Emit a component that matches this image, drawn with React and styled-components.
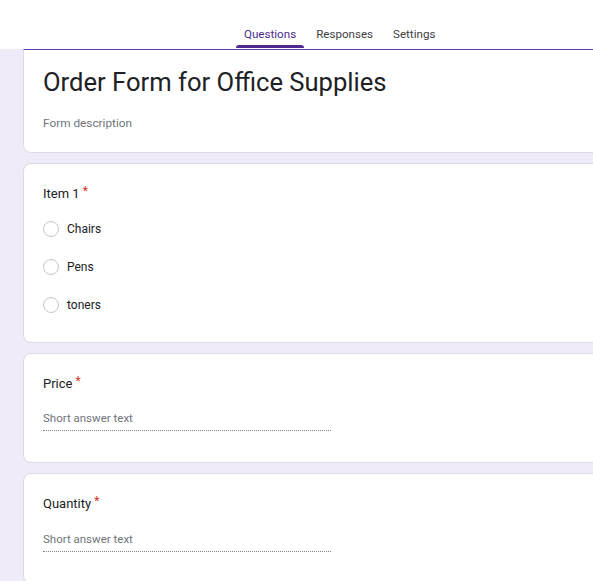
import React from "react";
import styled, { createGlobalStyle } from "styled-components";

const Global = createGlobalStyle`
  html, body { margin: 0; padding: 0; }
  body {
    background: #f0ebf8;
    font-family: Roboto, "Liberation Sans", Arial, sans-serif;
    overflow: hidden;
    color: #202124;
  }
`;

const Page = styled.div`
  width: 593px;
  height: 581px;
  overflow: hidden;
  background: #f0ebf8;
`;

const Header = styled.header`
  height: 49px;
  background: #ffffff;
  display: flex;
  align-items: flex-start;
  padding-left: 236px;
  gap: 4px;
`;

const Tab = styled.div`
  position: relative;
  padding: 26px 8px 0;
  height: 23px;
  font-size: 11.6px;
  line-height: 16px;
  color: ${(p) => (p.$active ? "#4b2b8c" : "#3c4043")};
  &::after {
    content: "";
    display: ${(p) => (p.$active ? "block" : "none")};
    position: absolute;
    left: 0;
    right: 0;
    bottom: 1px;
    height: 3px;
    border-radius: 3px 3px 0 0;
    background: #4e2a8e;
  }
`;

const Column = styled.main`
  margin-left: 23px;
  width: 640px;
  display: flex;
  flex-direction: column;
  gap: 10px;
`;

const Card = styled.section`
  background: #fff;
  border: 1px solid #dadce0;
  border-radius: ${(p) => (p.$head ? "0 0 8px 8px" : "8px")};
  ${(p) => (p.$head ? "border-top: 1px solid #673ab7;" : "")}
  padding: ${(p) => p.$pad};
  display: flex;
  flex-direction: column;
`;

const Title = styled.h1`
  margin: 0;
  font-weight: 400;
  font-size: 25.6px;
  line-height: 32px;
  color: #202124;
`;

const Description = styled.div`
  margin-top: 17px;
  font-size: 11.8px;
  line-height: 16px;
  color: #70757a;
`;

const Question = styled.div`
  font-size: 13px;
  line-height: 20px;
  color: #202124;
  display: flex;
  align-items: flex-start;
`;

const Star = styled.span`
  color: #d93025;
  margin-left: 3px;
  font-size: 12px;
  line-height: 14px;
`;

const Options = styled.div`
  margin-top: 6px;
  display: flex;
  flex-direction: column;
`;

const Option = styled.label`
  height: 38px;
  display: flex;
  align-items: center;
  gap: 8px;
  font-size: 12px;
  color: #202124;
`;

const Radio = styled.span`
  width: 14px;
  height: 14px;
  border-radius: 50%;
  border: 1px solid #c4c7cc;
  flex: none;
`;

const ShortAnswer = styled.div`
  margin-top: ${(p) => p.$gap}px;
  width: 288px;
  font-size: 11.5px;
  line-height: 16px;
  color: #70757a;
  padding-bottom: 4px;
  border-bottom: 1px dotted #80868b;
`;

function ShortQuestion({ label, top, gap, bottom }) {
  return (
    <Card $pad={`${top}px 19px ${bottom}px`}>
      <Question>
        {label}
        <Star>*</Star>
      </Question>
      <ShortAnswer $gap={gap}>Short answer text</ShortAnswer>
    </Card>
  );
}

export default function App() {
  return (
    <Page>
      <Global />
      <Header>
        <Tab $active>Questions</Tab>
        <Tab>Responses</Tab>
        <Tab>Settings</Tab>
      </Header>
      <Column>
        <Card $head $pad="16px 19px 21px">
          <Title>Order Form for Office Supplies</Title>
          <Description>Form description</Description>
        </Card>
        <Card $pad="20px 19px 18px">
          <Question>
            Item 1<Star>*</Star>
          </Question>
          <Options>
            {["Chairs", "Pens", "toners"].map((o) => (
              <Option key={o}>
                <Radio />
                {o}
              </Option>
            ))}
          </Options>
        </Card>
        <ShortQuestion label="Price" top={20} gap={16} bottom={31} />
        <ShortQuestion label="Quantity" top={20} gap={17} bottom={31} />
      </Column>
    </Page>
  );
}
